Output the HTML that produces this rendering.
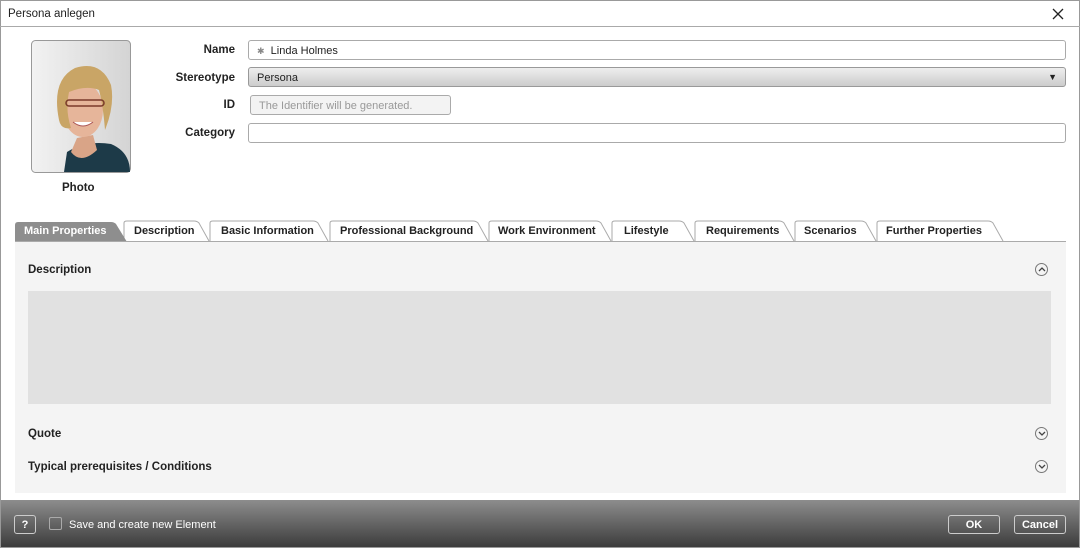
<!DOCTYPE html>
<html><head><meta charset="utf-8"><style>
*{margin:0;padding:0;box-sizing:border-box}
body{width:1080px;height:548px;position:relative;background:#fff;font-family:"Liberation Sans",sans-serif;font-size:12px;color:#222;overflow:hidden}
.a{position:absolute}
.lbl{position:absolute;font-weight:bold;font-size:11.5px;text-align:right;width:100px;left:135px}
.inp{position:absolute;border:1px solid #aaa;border-radius:3px;background:#fff;height:20px;font-size:11px;padding:4px 8px}
.tt{position:absolute;top:225px;font-weight:bold;font-size:11px;color:#222}
.h{position:absolute;font-weight:bold;font-size:11.5px;left:28px}
.chev{position:absolute;left:1035px;width:13px;height:13px;border:1px solid #777;border-radius:50%}
.btn{position:absolute;top:515px;height:19px;border:1px solid #ccc;border-radius:3px;color:#fff;font-weight:bold;font-size:11px;text-align:center;line-height:18px}
</style></head><body>
<div class="a" style="left:0;top:0;width:1080px;height:548px;border:1px solid #999"></div>
<div class="a" style="left:8px;top:8px;font-size:11.5px">Persona anlegen</div>
<svg class="a" style="left:1052px;top:8px" width="12" height="12"><path d="M1 1L11 11M11 1L1 11" stroke="#222" stroke-width="1.3"/></svg>
<div class="a" style="left:0;top:26px;width:1080px;height:1px;background:#aaa"></div>

<svg class="a" style="left:31px;top:40px" width="100" height="133" viewBox="0 0 100 133">
<defs><linearGradient id="bg" x1="0" x2="1"><stop offset="0" stop-color="#f2f2f2"/><stop offset="1" stop-color="#d4d4d4"/></linearGradient></defs>
<rect x="0.5" y="0.5" width="99" height="132" rx="4" fill="url(#bg)" stroke="#999"/>
<path d="M33 132 L36 112 Q55 100 80 104 Q99 112 99 132Z" fill="#1d3a48"/>
<path d="M40 112 Q50 125 66 110 L62 95 L46 98Z" fill="#d9a487"/>
<ellipse cx="52" cy="70" rx="20" ry="27" fill="#e6b59a"/>
<path d="M28 80 Q20 40 44 28 Q70 20 80 45 Q84 65 74 90 Q72 65 68 50 Q55 45 38 52 Q34 70 40 88 Q30 90 28 80Z" fill="#c9a566"/>
<rect x="35" y="60" width="38" height="6" rx="3" fill="none" stroke="#7a3a2a" stroke-width="1.5"/>
<path d="M42 82 Q52 90 62 82" fill="#fff" stroke="#a55"/>
</svg>
<div class="a" style="left:62px;top:182px;font-weight:bold;font-size:11.5px">Photo</div>

<div class="lbl" style="top:44px">Name</div>
<div class="lbl" style="top:72px">Stereotype</div>
<div class="lbl" style="top:99px">ID</div>
<div class="lbl" style="top:127px">Category</div>
<div class="inp" style="left:248px;top:40px;width:818px"><span style="color:#888;font-size:9px">✱</span>&nbsp; Linda Holmes</div>
<div class="inp" style="left:248px;top:67px;width:818px;background:linear-gradient(#eee,#ccc);border-color:#999">Persona<span style="position:absolute;right:8px;top:4px;font-size:9px">▼</span></div>
<div class="inp" style="left:250px;top:95px;width:201px;background:#f3f3f3;color:#999">The Identifier will be generated.</div>
<div class="inp" style="left:248px;top:123px;width:818px"></div>

<svg class="a" style="left:0;top:218px" width="1080" height="26">
<g fill="#fff" stroke="#aaa">
<path d="M877 23V5Q877 3 880 3H988Q991 3 993 5L1003 23"/>
<path d="M795 23V5Q795 3 798 3H861Q864 3 866 5L876 23"/>
<path d="M695 23V5Q695 3 698 3H779Q782 3 784 5L794 23"/>
<path d="M612 23V5Q612 3 615 3H679Q682 3 684 5L694 23"/>
<path d="M489 23V5Q489 3 492 3H596Q599 3 601 5L611 23"/>
<path d="M330 23V5Q330 3 333 3H473Q476 3 478 5L488 23"/>
<path d="M210 23V5Q210 3 213 3H313Q316 3 318 5L328 23"/>
<path d="M124 23V5Q124 3 127 3H194Q197 3 199 5L209 23"/>
</g>
<path d="M15 24V7Q15 4 18 4H111Q114 4 116 6L127 24Z" fill="#8e8e8e"/>
<line x1="15" y1="23.5" x2="1066" y2="23.5" stroke="#aaa"/>
</svg>
<div class="tt" style="left:24px;color:#fff">Main Properties</div>
<div class="tt" style="left:134px">Description</div>
<div class="tt" style="left:221px">Basic Information</div>
<div class="tt" style="left:340px">Professional Background</div>
<div class="tt" style="left:498px">Work Environment</div>
<div class="tt" style="left:624px">Lifestyle</div>
<div class="tt" style="left:706px">Requirements</div>
<div class="tt" style="left:804px">Scenarios</div>
<div class="tt" style="left:886px">Further Properties</div>

<div class="a" style="left:15px;top:242px;width:1051px;height:251px;background:#f4f4f4"></div>
<div class="h" style="top:264px">Description</div>
<div class="chev" style="top:263px"></div><svg class="a" style="left:1038px;top:267px" width="8" height="5"><path d="M1 4L4 1L7 4" stroke="#444" fill="none" stroke-width="1.3"/></svg>
<div class="a" style="left:28px;top:291px;width:1023px;height:113px;background:#e1e1e1"></div>
<div class="h" style="top:428px">Quote</div>
<div class="chev" style="top:427px"></div><svg class="a" style="left:1038px;top:431px" width="8" height="5"><path d="M1 1L4 4L7 1" stroke="#444" fill="none" stroke-width="1.3"/></svg>
<div class="h" style="top:461px">Typical prerequisites / Conditions</div>
<div class="chev" style="top:460px"></div><svg class="a" style="left:1038px;top:464px" width="8" height="5"><path d="M1 1L4 4L7 1" stroke="#444" fill="none" stroke-width="1.3"/></svg>

<div class="a" style="left:1px;top:500px;width:1078px;height:47px;background:linear-gradient(#8d8d8d,#3c3c3c)"></div>
<div class="btn" style="left:14px;width:22px">?</div>
<div class="a" style="left:49px;top:517px;width:13px;height:13px;border:1px solid #aaa;border-radius:2px"></div>
<div class="a" style="left:69px;top:519px;color:#fff;font-size:11px">Save and create new Element</div>
<div class="btn" style="left:948px;width:52px">OK</div>
<div class="btn" style="left:1014px;width:52px">Cancel</div>
</body></html>
